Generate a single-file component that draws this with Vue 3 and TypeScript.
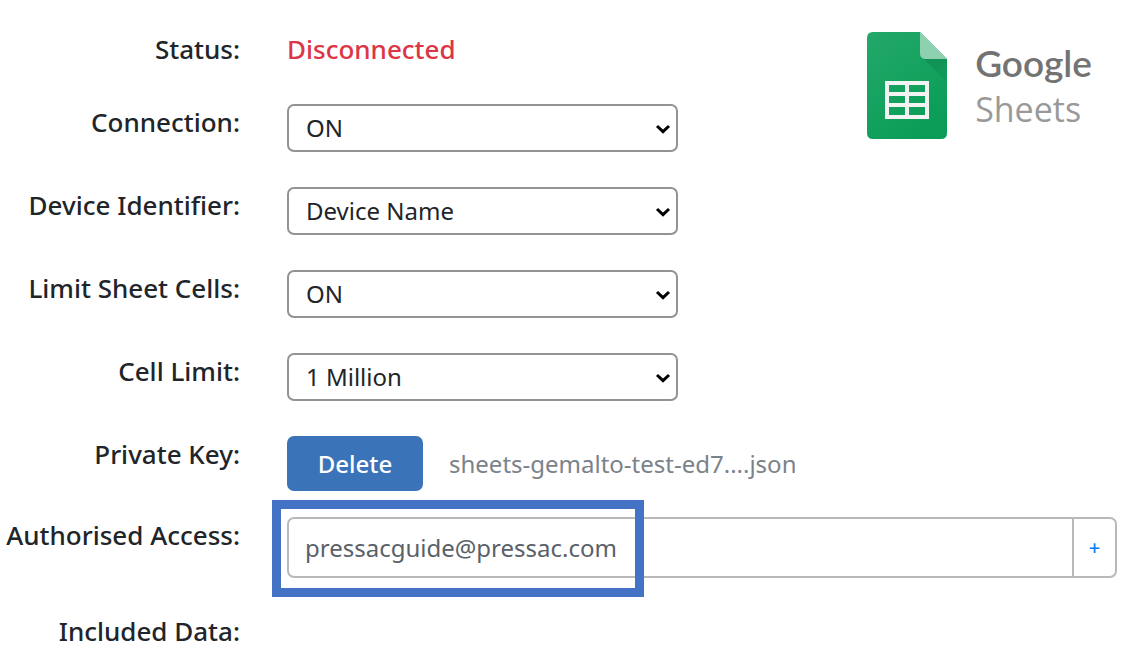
<script setup lang="ts">
import { ref } from 'vue'

interface SelectField {
  id: string
  label: string
  options: string[]
  value: string
}

const fields = ref<SelectField[]>([
  { id: 'connection', label: 'Connection:', options: ['ON', 'OFF'], value: 'ON' },
  { id: 'identifier', label: 'Device Identifier:', options: ['Device Name', 'Device ID'], value: 'Device Name' },
  { id: 'limit-cells', label: 'Limit Sheet Cells:', options: ['ON', 'OFF'], value: 'ON' },
  { id: 'cell-limit', label: 'Cell Limit:', options: ['1 Million', '2 Million'], value: '1 Million' },
])

const email = ref('pressacguide@pressac.com')
</script>

<template>
  <form class="settings" @submit.prevent>
    <div class="top">
      <div class="fields">
        <div class="row status-row">
          <span class="label">Status:</span>
          <span class="status">Disconnected</span>
        </div>
        <div v-for="field in fields" :key="field.id" class="row">
          <label class="label" :for="field.id">{{ field.label }}</label>
          <div class="select-wrap">
            <select :id="field.id" v-model="field.value">
              <option v-for="option in field.options" :key="option">{{ option }}</option>
            </select>
            <svg class="chevron" viewBox="0 0 16 10" aria-hidden="true">
              <path d="M2 2 L8 7.6 L14 2" fill="none" stroke="#000" stroke-width="3" />
            </svg>
          </div>
        </div>
      </div>
      <div class="brand">
        <svg class="sheet-icon" viewBox="0 0 80 107" aria-hidden="true">
          <defs>
            <linearGradient id="page" x1="0" y1="0" x2="0.6" y2="1">
              <stop offset="0" stop-color="#23a869" />
              <stop offset="1" stop-color="#0a9d58" />
            </linearGradient>
            <linearGradient id="shade" x1="0" y1="0" x2="1" y2="1">
              <stop offset="0" stop-color="#0b7f48" stop-opacity="0.6" />
              <stop offset="1" stop-color="#0b7f48" stop-opacity="0.1" />
            </linearGradient>
          </defs>
          <path d="M6 0H53L80 27V101Q80 107 74 107H6Q0 107 0 101V6Q0 0 6 0Z" fill="url(#page)" />
          <path d="M55 25L80 50V27Z" fill="url(#shade)" />
          <path d="M53 0L80 27H59Q53 27 53 21Z" fill="#8ed1b1" />
          <path
            d="M18 49H62V87H18ZM22 53V60H38V53ZM42 53V60H58V53ZM22 64V71H38V64ZM42 64V71H58V64ZM22 75V83H38V75ZM42 75V83H58V75Z"
            fill="#f3f3f3"
            fill-rule="evenodd"
          />
        </svg>
        <div class="brand-text">
          <span class="google">Google</span>
          <span class="sheets">Sheets</span>
        </div>
      </div>
    </div>

    <div class="row key-row">
      <span class="label">Private Key:</span>
      <div class="key">
        <button type="button" class="delete">Delete</button>
        <span class="file">sheets-gemalto-test-ed7....json</span>
      </div>
    </div>

    <div class="row">
      <label class="label" for="access">Authorised Access:</label>
      <div class="access">
        <input id="access" v-model="email" type="text" />
        <button type="button" class="add" aria-label="Add">+</button>
        <div class="highlight"></div>
      </div>
    </div>

    <div class="row">
      <span class="label">Included Data:</span>
    </div>
  </form>
</template>

<style>
body {
  margin: 0;
  background: #fff;
}
</style>

<style scoped>
.settings {
  box-sizing: border-box;
  padding: 31px 19px 0 0;
  font-family: "Segoe UI", "Noto Sans", "Open Sans", sans-serif;
  font-size: 24px;
  line-height: 36px;
  color: #212529;
}

.top {
  display: flex;
  justify-content: space-between;
  align-items: flex-start;
}

.row {
  display: grid;
  grid-template-columns: 240px minmax(0, 1fr);
  column-gap: 47px;
  align-items: start;
  margin-bottom: 35px;
}

.status-row {
  margin-bottom: 37px;
}

.fields {
  flex: 0 1 678px;
}

.label {
  font-size: 26px;
  font-weight: 500;
  text-align: right;
  white-space: nowrap;
}

.status {
  font-size: 26px;
  font-weight: 500;
  color: #dc3545;
}

.select-wrap {
  position: relative;
}

select {
  display: block;
  box-sizing: border-box;
  width: 100%;
  height: 48px;
  padding: 0 40px 0 17px;
  border: 2px solid #939393;
  border-radius: 7px;
  background: #fff;
  color: #212529;
  font: inherit;
  appearance: none;
}

.chevron {
  position: absolute;
  right: 7px;
  top: 20px;
  width: 16px;
  height: 10px;
  pointer-events: none;
}

.brand {
  display: flex;
  gap: 28px;
  margin: 1px 25px 0 0;
}

.sheet-icon {
  width: 80px;
  height: 107px;
}

.brand-text {
  display: flex;
  flex-direction: column;
  padding-top: 8px;
}

.google {
  font-family: Lato, sans-serif;
  font-size: 37px;
  font-weight: 600;
  line-height: 46px;
  color: #737373;
}

.sheets {
  font-family: "Open Sans", sans-serif;
  font-size: 34px;
  line-height: 46px;
  color: #999;
}

.key-row {
  margin-bottom: 26px;
}

.key {
  display: flex;
  align-items: center;
  gap: 26px;
}

.delete {
  width: 136px;
  height: 55px;
  padding: 0;
  border: 0;
  border-radius: 7px;
  background: #3b73b9;
  color: #fff;
  font: inherit;
  font-weight: 500;
}

.file {
  color: #7b838a;
}

.access {
  position: relative;
  display: flex;
  box-sizing: border-box;
  height: 61px;
  border: 2px solid #b9b9b9;
  border-radius: 7px;
}

input {
  flex: 1;
  min-width: 0;
  padding: 0 16px;
  border: 0;
  border-radius: 7px;
  background: transparent;
  color: #5a6169;
  font: inherit;
}

.add {
  width: 43px;
  padding: 0;
  border: 0;
  border-left: 2px solid #b9b9b9;
  background: transparent;
  color: #007bff;
  font: inherit;
  font-size: 20px;
  font-weight: 500;
}

.highlight {
  position: absolute;
  box-sizing: border-box;
  left: -17px;
  top: -19px;
  width: 372px;
  height: 97px;
  border: 9px solid #4472c4;
  pointer-events: none;
}
</style>
